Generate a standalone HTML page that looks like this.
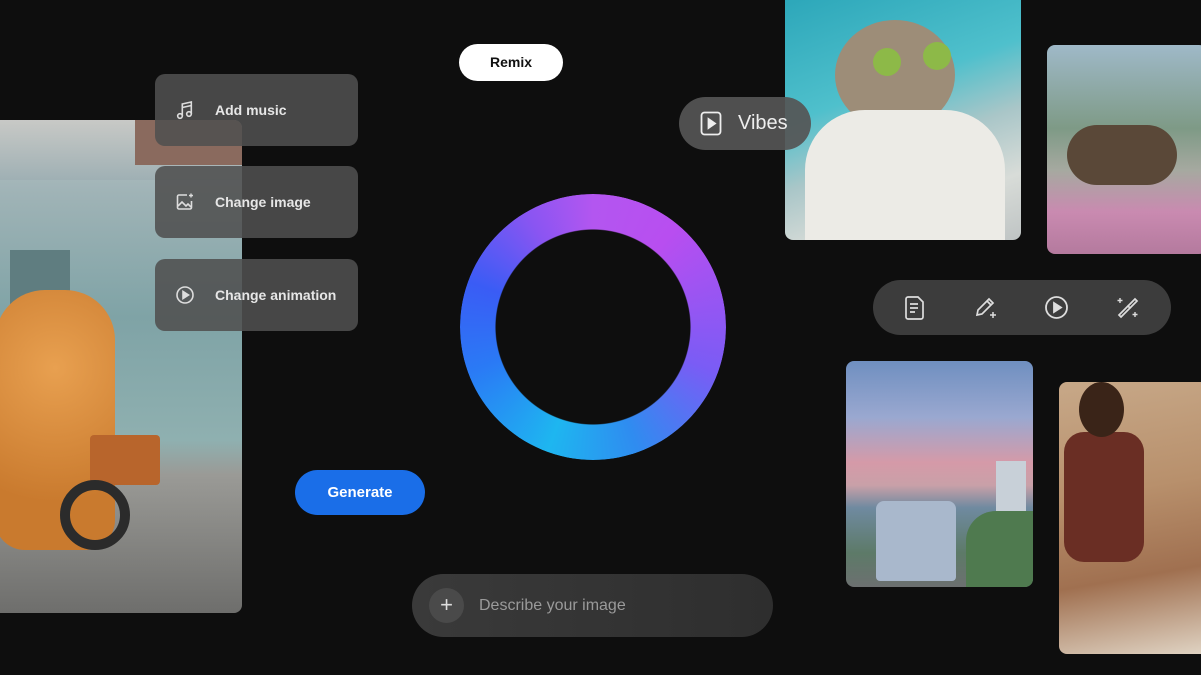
<!DOCTYPE html>
<html><head><style>
*{margin:0;padding:0;box-sizing:border-box}
body{width:1201px;height:675px;background:#0e0e0e;position:relative;overflow:hidden;font-family:"Liberation Sans",sans-serif}
.a{position:absolute}
.img{position:absolute;border-radius:8px;overflow:hidden}
.card{position:absolute;left:155px;width:203px;height:72px;border-radius:10px;background:rgba(80,80,80,.88);color:#e6e6e6;font-size:14px;font-weight:bold;display:flex;align-items:center}
.card svg{margin-left:20px;margin-right:20px}
</style></head><body>

<div class="img" style="left:-10px;top:120px;width:252px;height:493px;background:linear-gradient(180deg,#b9c3c6 0%,#9fb3b6 15%,#7fa3a6 40%,#8fb0b0 65%,#9a9a96 72%,#6e6e6c 100%)">
  <div class="a" style="left:0;top:0;width:252px;height:60px;background:linear-gradient(#c8c9c6,#9fb0b4)"></div>
  <div class="a" style="left:145px;top:0;width:107px;height:45px;background:#8a6a5e"></div>
  <div class="a" style="left:20px;top:130px;width:60px;height:70px;background:#5f7d80"></div>
  <div class="a" style="left:5px;top:170px;width:120px;height:260px;border-radius:50px 50px 30px 30px;background:radial-gradient(circle at 50% 30%,#e8a050,#c97a2e 70%)"></div>
  <div class="a" style="left:100px;top:315px;width:70px;height:50px;background:#b8652c;border-radius:4px"></div>
  <div class="a" style="left:70px;top:360px;width:70px;height:70px;border-radius:50%;border:10px solid #2b2b2b"></div>
</div>

<div class="card" style="top:74px"><svg width="20" height="20" viewBox="0 0 20 20" fill="none" stroke="#ddd" stroke-width="1.6"><circle cx="5" cy="16" r="2.3"/><circle cx="14" cy="14" r="2.3"/><path d="M7.3 16V4l9-2v12M7.3 7.5l9-2"/></svg>Add music</div>
<div class="card" style="top:166px"><svg width="20" height="20" viewBox="0 0 20 20" fill="none" stroke="#ddd" stroke-width="1.6"><path d="M12 3H4a1.5 1.5 0 0 0-1.5 1.5v11A1.5 1.5 0 0 0 4 17h11a1.5 1.5 0 0 0 1.5-1.5V9"/><path d="M3 14l4-4 4 4 2-2 3 3"/><path d="M16 1.5v4M14 3.5h4" stroke-width="1.4"/></svg>Change image</div>
<div class="card" style="top:259px"><svg width="20" height="20" viewBox="0 0 20 20" fill="none" stroke="#ddd" stroke-width="1.6"><circle cx="10" cy="10" r="8"/><path d="M8 6.5v7l5.5-3.5z" fill="#ddd"/></svg>Change animation</div>

<div class="a" style="left:459px;top:44px;width:104px;height:37px;border-radius:19px;background:#fff;color:#111;font-size:14px;font-weight:bold;text-align:center;line-height:37px">Remix</div>

<div class="a" style="left:460px;top:194px;width:266px;height:266px;border-radius:50%;background:conic-gradient(from 0deg,#b356f0,#b84ef0 40deg,#7a5cf5 110deg,#2f8cf0 160deg,#1eb6f0 200deg,#2a7af5 250deg,#3a5cf5 290deg,#8a55f2 330deg,#b356f0);-webkit-mask:radial-gradient(circle,transparent 97px,#000 98px);mask:radial-gradient(circle,transparent 97px,#000 98px)"></div>

<div class="a" style="left:295px;top:470px;width:130px;height:45px;border-radius:23px;background:#1a6ee8;color:#fff;font-size:15px;font-weight:bold;text-align:center;line-height:45px">Generate</div>

<div class="a" style="left:412px;top:574px;width:361px;height:63px;border-radius:32px;background:linear-gradient(90deg,#3a3a3a,#2e2e2e);color:#9a9a9a;font-size:16px;line-height:63px;padding-left:67px">Describe your image
  <div class="a" style="left:17px;top:14px;width:35px;height:35px;border-radius:50%;background:#4a4a4a;color:#ddd;font-size:22px;line-height:33px;text-align:center;padding:0">+</div>
</div>

<div class="img" style="left:785px;top:-10px;width:236px;height:250px;background:linear-gradient(160deg,#2aa5b8 0%,#4fc0cc 40%,#a9c6c8 60%,#d8dcd8 80%,#bfc4c4 100%)">
  <div class="a" style="left:50px;top:30px;width:120px;height:110px;border-radius:50%;background:#9d8d78"></div>
  <div class="a" style="left:20px;top:120px;width:200px;height:140px;border-radius:60px 60px 0 0;background:#ecebe6"></div>
  <div class="a" style="left:88px;top:58px;width:28px;height:28px;border-radius:50%;background:#8db948"></div>
  <div class="a" style="left:138px;top:52px;width:28px;height:28px;border-radius:50%;background:#8db948"></div>
</div>

<div class="a" style="left:679px;top:97px;width:132px;height:53px;border-radius:27px;background:rgba(85,85,85,.92);color:#eee;font-size:20px;line-height:53px;padding-left:59px">Vibes
<svg class="a" style="left:21px;top:14px" width="22" height="25" viewBox="0 0 22 25" fill="none" stroke="#eee" stroke-width="1.8"><rect x="1.5" y="1.5" width="19" height="22" rx="3"/><path d="M8.5 8v9l6.5-4.5z" fill="#eee"/></svg></div>

<div class="img" style="left:1047px;top:45px;width:160px;height:209px;background:linear-gradient(180deg,#9fb9c8 0%,#7e9a86 40%,#a6a9a0 60%,#c98ab0 80%,#b47a9e 100%)">
  <div class="a" style="left:20px;top:80px;width:110px;height:60px;border-radius:30px;background:#5a4838"></div>
</div>

<div class="a" style="left:873px;top:280px;width:298px;height:55px;border-radius:28px;background:#3c3c3c"></div>
<svg class="a" style="left:904px;top:295px" width="22" height="26" viewBox="0 0 22 26" fill="none" stroke="#ddd" stroke-width="1.7"><path d="M4 2h10l5 5v15a2 2 0 0 1-2 2H4a2 2 0 0 1-2-2V4a2 2 0 0 1 2-2z"/><path d="M6 9h8M6 13h8M6 17h5"/></svg>
<svg class="a" style="left:973px;top:295px" width="26" height="26" viewBox="0 0 26 26" fill="none" stroke="#ddd" stroke-width="1.7"><path d="M4 20l1-5L16 4l4 4L9 19z"/><path d="M14 6l4 4"/><path d="M20 17v6M17 20h6" stroke-width="1.5"/></svg>
<svg class="a" style="left:1044px;top:295px" width="25" height="25" viewBox="0 0 25 25" fill="none" stroke="#ddd" stroke-width="1.8"><circle cx="12.5" cy="12.5" r="10.5"/><path d="M10 8v9l7-4.5z" fill="#ddd"/></svg>
<svg class="a" style="left:1115px;top:295px" width="26" height="26" viewBox="0 0 26 26" fill="none" stroke="#ddd" stroke-width="1.7"><path d="M6 22l-2-2 9-9 2 2z"/><path d="M13 11l7-7 2 2-7 7"/><path d="M5 3v5M2.5 5.5h5M20 17v5M17.5 19.5h5" stroke-width="1.4"/></svg>

<div class="img" style="left:846px;top:361px;width:187px;height:226px;background:linear-gradient(180deg,#6f8fc0 0%,#9aa8d0 25%,#d59aa8 45%,#c9a0a8 55%,#6f8aa0 65%,#5d7a68 85%,#6c7070 100%)">
  <div class="a" style="left:30px;top:140px;width:80px;height:80px;border-radius:8px 8px 4px 4px;background:#a9b8cc"></div>
  <div class="a" style="left:150px;top:100px;width:30px;height:80px;background:#c8d0d8"></div>
  <div class="a" style="left:120px;top:150px;width:67px;height:76px;background:#4f7a4f;border-radius:30px 0 0 0"></div>
</div>

<div class="img" style="left:1059px;top:382px;width:150px;height:272px;background:linear-gradient(170deg,#c7a888 0%,#b8906c 40%,#a07050 70%,#e0d4c4 100%)">
  <div class="a" style="left:5px;top:50px;width:80px;height:130px;border-radius:20px;background:#6a2e24"></div>
  <div class="a" style="left:20px;top:0;width:45px;height:55px;border-radius:50%;background:#3a2418"></div>
</div>

</body></html>
